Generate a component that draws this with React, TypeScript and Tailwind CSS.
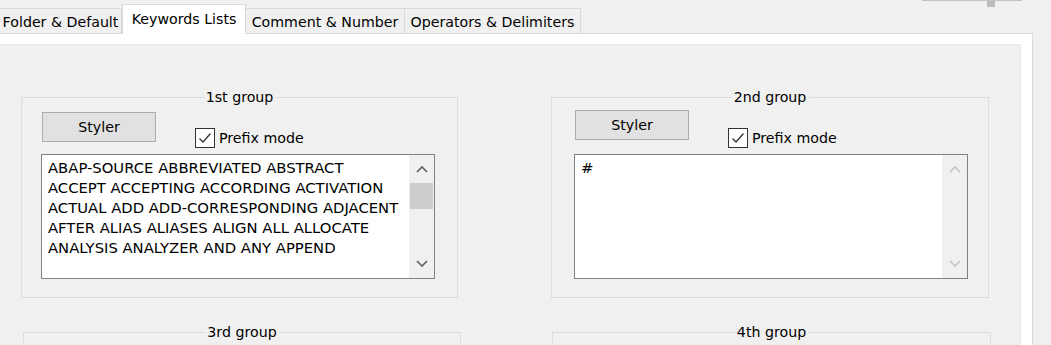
import React from "react";

const keywords = [
  "ABAP-SOURCE ABBREVIATED ABSTRACT",
  "ACCEPT ACCEPTING ACCORDING ACTIVATION",
  "ACTUAL ADD ADD-CORRESPONDING ADJACENT",
  "AFTER ALIAS ALIASES ALIGN ALL ALLOCATE",
  "ANALYSIS ANALYZER AND ANY APPEND",
];

const Chevron = ({ up, disabled }: { up?: boolean; disabled?: boolean }) => (
  <svg width="12" height="8" viewBox="0 0 12 8">
    <polyline
      points={up ? "1,7 6,2 11,7" : "1,1 6,6 11,1"}
      fill="none"
      stroke={disabled ? "#c4c4c4" : "#606060"}
      strokeWidth="1.6"
    />
  </svg>
);

const CheckBox = ({ label }: { label: string }) => (
  <div className="flex items-center gap-[4px]">
    <div className="w-[20px] h-[20px] border border-[#333333] bg-white flex items-center justify-center">
      <svg width="16" height="16" viewBox="0 0 16 16">
        <polyline points="2.5,8.5 6,12 13.5,3.5" fill="none" stroke="#333333" strokeWidth="1.3" />
      </svg>
    </div>
    <span className="leading-[20px]">{label}</span>
  </div>
);

interface GroupProps {
  title: string;
  width: string;
  btnLeft: string;
  btnTop: string;
  boxLeft: string;
  lines: string[];
  scrollable: boolean;
}

const KeywordGroup = ({ title, width, btnLeft, btnTop, boxLeft, lines, scrollable }: GroupProps) => (
  <div className={`relative border border-[#dcdcdc] h-[201px] ${width}`}>
    <span className="absolute left-1/2 -translate-x-1/2 -top-[10px] bg-[#f0f0f0] px-[2px] leading-[18px]">
      {title}
    </span>
    <div className="flex items-start">
      <button className={`${btnLeft} ${btnTop} w-[114px] h-[30px] bg-[#e1e1e1] border border-[#adadad] leading-[28px] text-center`}>
        Styler
      </button>
      <div className="ml-[39px] mt-[30px]">
        <CheckBox label="Prefix mode" />
      </div>
    </div>
    <div className={`${boxLeft} mt-[6px] w-[394px] h-[125px] border border-[#828282] bg-white flex`}>
      <div className="flex-1 pl-[6px] pt-[3px] text-[14.8px] leading-[20px] whitespace-nowrap overflow-hidden">
        {lines.map((l) => (
          <div key={l}>{l}</div>
        ))}
      </div>
      <div className="w-[25px] bg-[#f0f0f0] flex flex-col items-center">
        <div className="h-[28px] flex items-center justify-center">
          <Chevron up disabled={!scrollable} />
        </div>
        {scrollable && <div className="w-[23px] h-[26px] bg-[#cdcdcd]" />}
        <div className="flex-1" />
        <div className="h-[28px] flex items-center justify-center">
          <Chevron disabled={!scrollable} />
        </div>
      </div>
    </div>
  </div>
);

const EmptyGroup = ({ title, width }: { title: string; width: string }) => (
  <div className={`relative border border-[#dcdcdc] h-[120px] ${width}`}>
    <span className="absolute left-1/2 -translate-x-1/2 -top-[10px] bg-[#f0f0f0] px-[2px] leading-[18px]">
      {title}
    </span>
  </div>
);

const App = () => {
  const tabs = [
    { label: "Folder & Default", w: "w-[122px]", active: false, extra: "border-r" },
    { label: "Keywords Lists", w: "w-[124px]", active: true, extra: "border-l border-r" },
    { label: "Comment & Number", w: "w-[159px]", active: false, extra: "border-r" },
    { label: "Operators & Delimiters", w: "w-[176px]", active: false, extra: "border-r" },
  ];

  return (
    <div className="w-[1051px] h-[345px] bg-[#f0f0f0] overflow-hidden text-[14.2px] text-black font-[family-name:'DejaVu_Sans',sans-serif]">
      <div className="h-[33px] flex items-end">
        {tabs.map((t) =>
          t.active ? (
            <div
              key={t.label}
              className={`${t.w} ${t.extra} h-[30px] -mb-[1px] relative z-10 bg-white border-t border-[#d9d9d9] text-center leading-[28px]`}
            >
              {t.label}
            </div>
          ) : (
            <div
              key={t.label}
              className={`${t.w} ${t.extra} h-[25px] bg-[#f0f0f0] border-t border-[#d9d9d9] text-center leading-[26px]`}
            >
              {t.label}
            </div>
          )
        )}
        <div className="self-start ml-auto mr-[29px] w-[100px] h-[7px] border-t border-[#c4c4c4]">
          <div className="ml-[65px] w-[8px] h-[6px] bg-[#bdbdbd]" />
        </div>
      </div>
      <div className="w-[1033px] border-t border-r border-[#d9d9d9] bg-white pt-[10px] pr-[11px]">
        <div className="h-[301px] bg-[#f0f0f0] border-t border-r border-[#e9e9e9] pt-[52px]">
          <div className="flex">
            <div className="ml-[21px]">
              <KeywordGroup
                title="1st group"
                width="w-[437px]"
                btnLeft="ml-[20px]"
                btnTop="mt-[14px]"
                boxLeft="ml-[19px]"
                lines={keywords}
                scrollable
              />
            </div>
            <div className="ml-[93px]">
              <KeywordGroup
                title="2nd group"
                width="w-[438px]"
                btnLeft="ml-[23px]"
                btnTop="mt-[12px]"
                boxLeft="ml-[22px]"
                lines={["#"]}
                scrollable={false}
              />
            </div>
          </div>
          <div className="flex mt-[34px]">
            <div className="ml-[23px]">
              <EmptyGroup title="3rd group" width="w-[438px]" />
            </div>
            <div className="ml-[91px]">
              <EmptyGroup title="4th group" width="w-[439px]" />
            </div>
          </div>
        </div>
      </div>
    </div>
  );
};

export default App;
